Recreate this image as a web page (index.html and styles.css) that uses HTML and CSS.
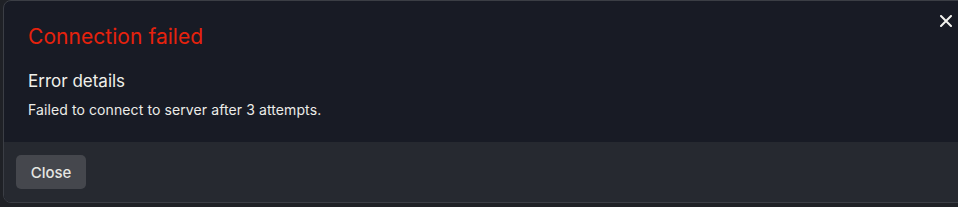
FILE: index.html
```html
<!DOCTYPE html>
<html lang="en">
<head>
	<meta charset="UTF-8" />
	<title>Connection failed</title>
	<link rel="stylesheet" href="styles.css">
</head>
<body>
	<div class="modal">
		<button class="closeX" type="button" aria-label="Close">
			<svg width="12" height="12" viewBox="0 0 12 12"><path d="M1 1L11 11M11 1L1 11" stroke="#f2f2ee" stroke-width="2" stroke-linecap="round"/></svg>
		</button>
		<div class="modalBody">
			<h2 class="title">Connection failed</h2>
			<h3 class="subTitle">Error details</h3>
			<p class="msg">Failed to connect to server after 3 attempts.</p>
		</div>
		<div class="modalFoot">
			<button class="btn" type="button">Close</button>
		</div>
	</div>
</body>
</html>
```

FILE: styles.css
```css
html,body {
	margin: 0;
	padding: 0;
	height: 100%;
}
body {
	background-color: #1f2126;
	font-family: Inter, "Noto Sans", sans-serif;
	overflow: hidden;
}
.modal {
	position: relative;
	margin-left: 3px;
	width: 965px;
	height: 203px;
	box-sizing: border-box;
	border: 1px solid #3b3e45;
	border-radius: 8px;
	background-color: #181b25;
	display: flex;
	flex-direction: column;
	overflow: hidden;
}
.closeX {
	position: absolute;
	top: 13px;
	left: 935px;
	background: none;
	border: 0;
	padding: 0;
	width: 14px;
	height: 14px;
	display: flex;
	align-items: center;
	justify-content: center;
}
.modalBody {
	flex: 1;
	padding: 22px 24px 0 24px;
}
.title {
	margin: 0;
	font-size: 21px;
	font-weight: 400;
	color: #e6220d;
	line-height: 28px;
	letter-spacing: 0.05px;
}
.subTitle {
	margin: 18px 0 0 0;
	font-size: 17px;
	font-weight: 400;
	color: #f0f0ea;
	line-height: 24px;
}
.msg {
	margin: 7px 0 0 0;
	font-size: 14px;
	color: #ecece8;
	line-height: 20px;
	letter-spacing: 0.1px;
}
.modalFoot {
	height: 60px;
	background-color: #262930;
	padding: 13px 12px;
	box-sizing: border-box;
}
.btn {
	font-family: Inter, "Noto Sans", sans-serif;
	font-size: 15px;
	font-weight: 500;
	color: #e6e6e2;
	background-color: #45474d;
	border: 0;
	border-radius: 5px;
	width: 70px;
	height: 34px;
}
```
